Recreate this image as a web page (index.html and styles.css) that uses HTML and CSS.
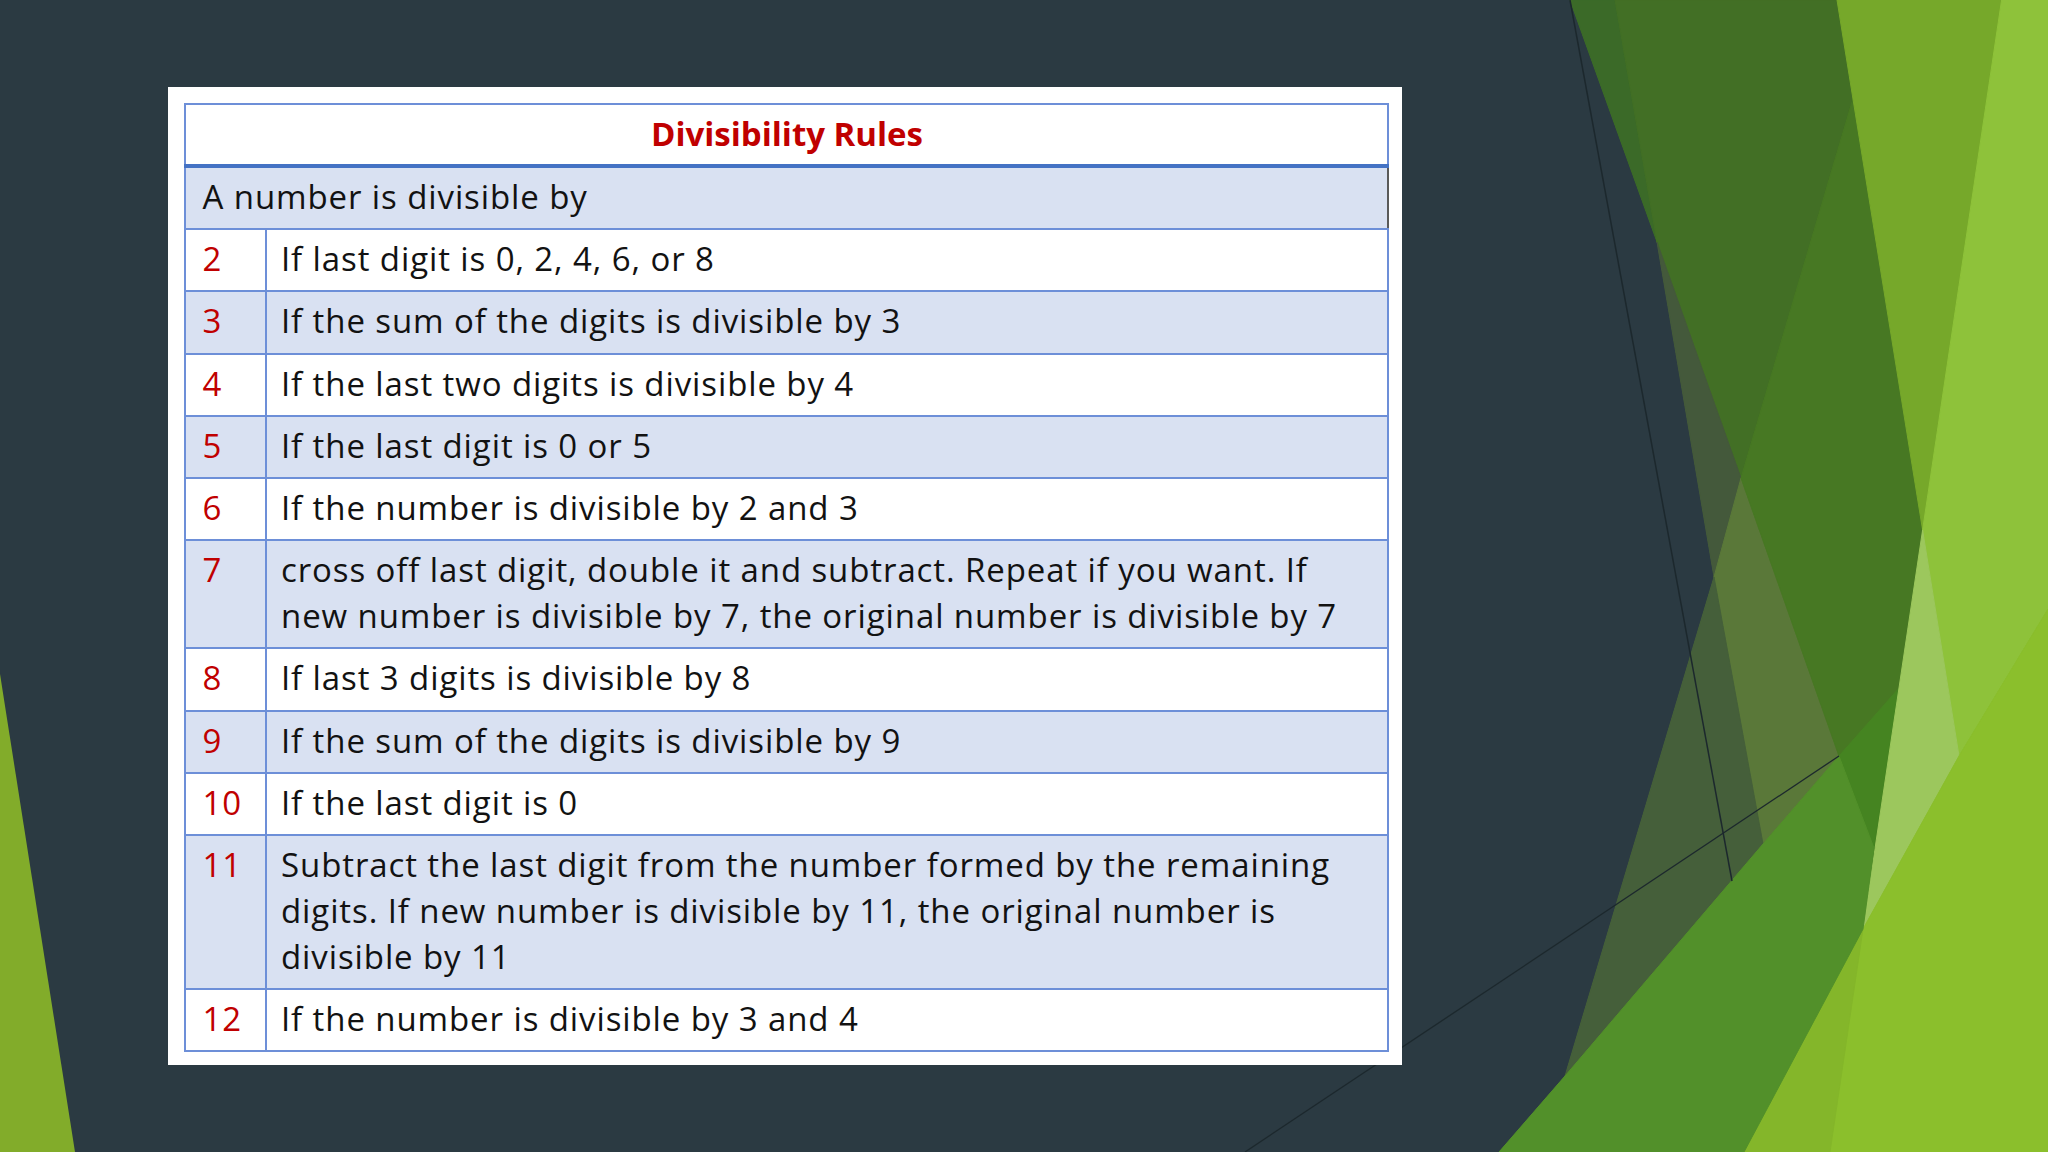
FILE: index.html
```html
<!DOCTYPE html>
<html lang="en">
<head>
<meta charset="utf-8">
<title>Divisibility Rules</title>
<link rel="stylesheet" href="styles.css">
</head>
<body>
<div class="backdrop" aria-hidden="true">
  <svg class="facets" viewBox="0 0 2048 1152" width="2048" height="1152" xmlns="http://www.w3.org/2000/svg">
    <polygon points="0,674 0,1152 75,1152" fill="#82ac2a"/>
    <polygon points="1570,0 2048,0 2048,1152 1499,1152 1565,1076 1714,577 1657,242" fill="#477823"/>
    <polygon points="1570,0 1615,0 1657,242" fill="#3b6a28" stroke="#3b6a28"/>
    <polygon points="1615,0 1837,0 1853,98.6 1741,478 1657,242" fill="#426f25" stroke="#426f25"/>
    <polygon points="1657,242 1741,478 1714,577" fill="#44593b" stroke="#44593b"/>
    <polygon points="1741,478 1714,577 1763,844 1839,756" fill="#5a7839" stroke="#5a7839"/>
    <polygon points="1714,577 1565,1076 1763,844" fill="#455f3a" stroke="#455f3a"/>
    <polygon points="1853,98.6 1741,478 1839,756 1899,688 1922.6,530" fill="#477823" stroke="#477823"/>
    <polygon points="1839,756 1899,688 1874,848" fill="#458421" stroke="#458421"/>
    <polygon points="1837,0 2001.6,0 1922.6,530" fill="#76a82a" stroke="#76a82a"/>
    <polygon points="2001.6,0 2048,0 2048,609 1959,756 1922.6,530" fill="#8ec23a" stroke="#8ec23a"/>
    <polygon points="1922.6,530 1959,756 1863,929" fill="#9cc75d" stroke="#9cc75d"/>
    <polygon points="2048,609 1959,756 1863,929 1744,1152 2048,1152" fill="#8bbf2c" stroke="#8bbf2c"/>
    <polygon points="1863,929 1744,1152 1830,1152" fill="#84b62a" stroke="#84b62a"/>
    <polygon points="1499,1152 1565,1076 1763,844 1839,756 1874,848 1863,929 1744,1152" fill="#52902a" stroke="#52902a"/>
    <line x1="1570" y1="0" x2="1732" y2="881" stroke="#1c282d" stroke-width="1.5"/>
    <line x1="1245" y1="1152" x2="1839" y2="756" stroke="#1c282d" stroke-width="1.3"/>
  </svg>
</div>
<main class="slide">
  <section class="card">
    <table class="rules">
      <colgroup>
        <col class="col-num">
        <col class="col-desc">
      </colgroup>
      <thead>
        <tr><th colspan="2" class="title">Divisibility Rules</th></tr>
      </thead>
      <tbody>
        <tr class="alt"><td colspan="2" class="intro">A number is divisible by</td></tr>
        <tr><td class="num">2</td><td class="desc">If last digit is 0, 2, 4, 6, or 8</td></tr>
        <tr class="alt"><td class="num">3</td><td class="desc">If the sum of the digits is divisible by 3</td></tr>
        <tr><td class="num">4</td><td class="desc">If the last two digits is divisible by 4</td></tr>
        <tr class="alt"><td class="num">5</td><td class="desc">If the last digit is 0 or 5</td></tr>
        <tr><td class="num">6</td><td class="desc">If the number is divisible by 2 and 3</td></tr>
        <tr class="alt"><td class="num">7</td><td class="desc">cross off last digit, double it and subtract. Repeat if you want. If<br>new number is divisible by 7, the original number is divisible by 7</td></tr>
        <tr><td class="num">8</td><td class="desc">If last 3 digits is divisible by 8</td></tr>
        <tr class="alt"><td class="num">9</td><td class="desc">If the sum of the digits is divisible by 9</td></tr>
        <tr><td class="num">10</td><td class="desc">If the last digit is 0</td></tr>
        <tr class="alt"><td class="num">11</td><td class="desc">Subtract the last digit from the number formed by the remaining<br>digits. If new number is divisible by 11, the original number is<br>divisible by 11</td></tr>
        <tr><td class="num">12</td><td class="desc">If the number is divisible by 3 and 4</td></tr>
      </tbody>
    </table>
  </section>
</main>
</body>
</html>
```

FILE: styles.css
```css
html, body {
  margin: 0;
  padding: 0;
}

body {
  width: 2048px;
  height: 1152px;
  overflow: hidden;
  position: relative;
  background: #2b3a42;
  font-family: "Open Sans", Lato, "Liberation Sans", sans-serif;
}

.backdrop {
  position: absolute;
  inset: 0;
  z-index: 0;
}

.facets {
  display: block;
}

.slide {
  position: relative;
  z-index: 1;
  display: flex;
  padding: 87px 0 0 168px;
}

.card {
  background: #ffffff;
  width: 1234px;
  box-sizing: border-box;
  padding: 16px 13px 13px 16px;
}

.rules {
  width: 1205px;
  border-collapse: collapse;
  table-layout: fixed;
}

.col-num {
  width: 81px;
}

.rules th,
.rules td {
  border: 2px solid #6d8fd8;
  padding: 6px 13px 8.2px 14px;
  font-size: 33px;
  line-height: 46px;
  letter-spacing: 0.9px;
  text-align: left;
  vertical-align: top;
  color: #121212;
  font-weight: 400;
  white-space: nowrap;
}

.rules .title {
  text-align: center;
  color: #c00000;
  font-weight: 700;
  letter-spacing: 0;
  padding-top: 6px;
  padding-bottom: 7px;
  border-bottom: 4px solid #4472c4;
}

.rules .alt td {
  background: #d9e1f2;
}

.rules .intro {
  padding-left: 16.5px;
  border-right-color: #5a5a5a;
}

.rules .num {
  padding-left: 16.5px;
  color: #c00000;
}
```
